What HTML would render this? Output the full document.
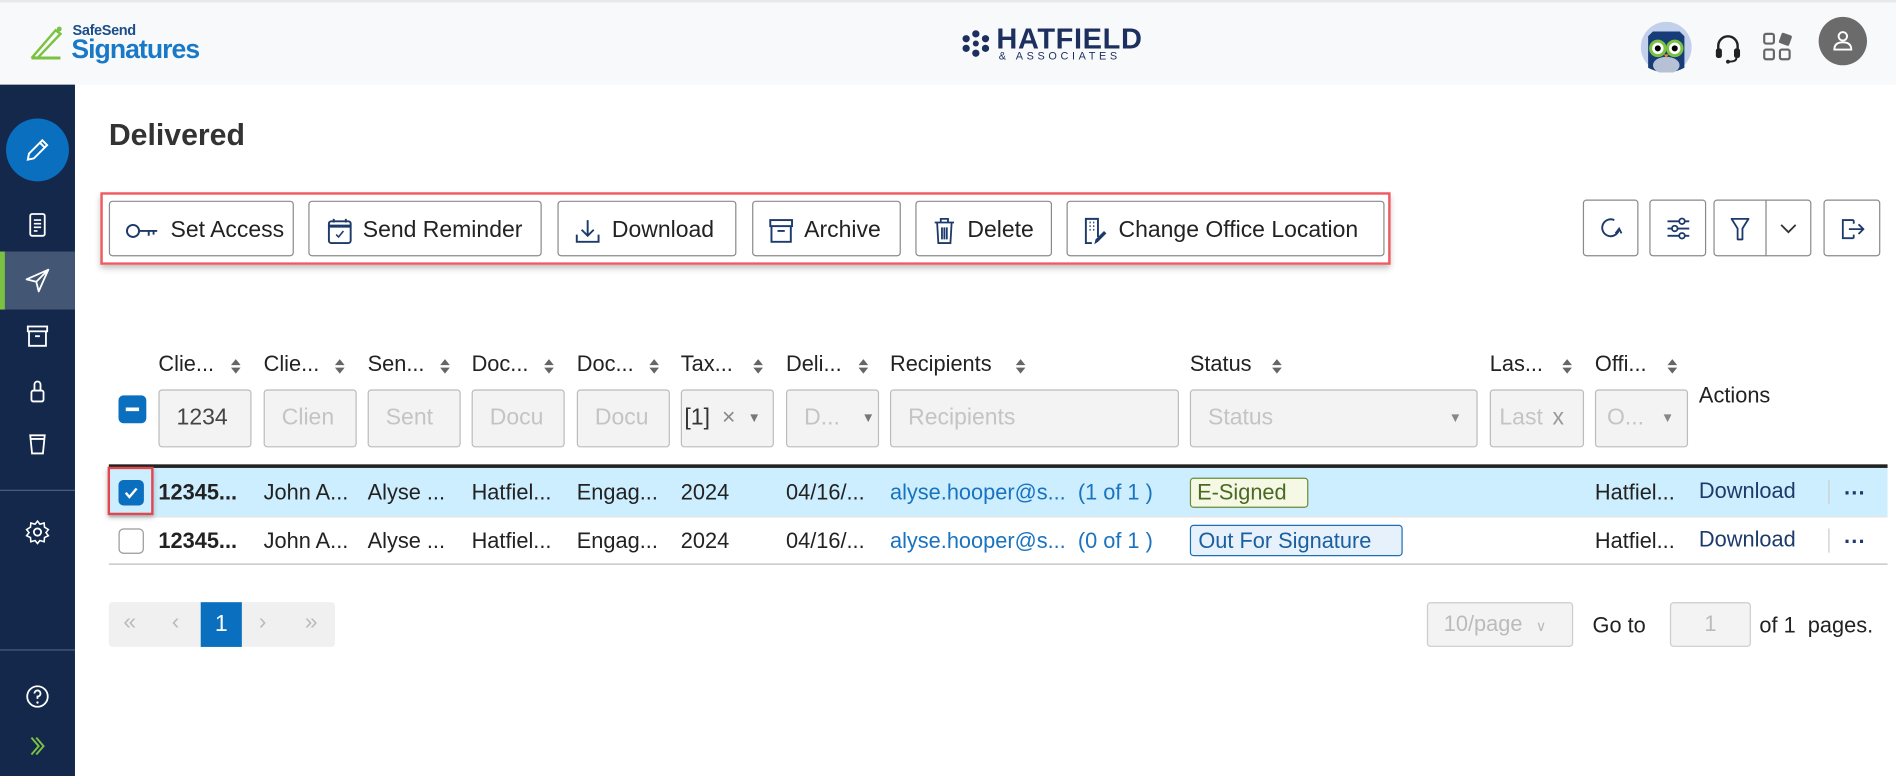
<!DOCTYPE html>
<html><head><meta charset="utf-8">
<style>
*{box-sizing:border-box;margin:0;padding:0}
html,body{width:1896px;height:776px;overflow:hidden;background:#fff}
#s{width:1568px;height:642px;transform:scale(1.2092);transform-origin:0 0;position:relative;font-family:"Liberation Sans",sans-serif;color:#222}
.a{position:absolute}
.hdr{left:0;top:0;width:1568px;height:70px;background:#f8f9fb;border-top:2px solid #e6e8eb}
.side{left:0;top:70px;width:62px;height:572px;background:#13284a}
.ic{position:absolute;left:19px;width:24px;height:24px}
.btn{position:absolute;top:166px;height:46px;border:1px solid #8a8a8a;border-radius:3px;background:#fff;font-size:19px;color:#222;display:flex;align-items:center;padding-left:12px;white-space:nowrap;padding-top:3px}
.btn svg{margin-right:8px}
.rb{position:absolute;top:165px;height:47px;border:1px solid #8a8a8a;border-radius:3px;background:#fff;display:flex;align-items:center;justify-content:center}
.th{position:absolute;top:291px;font-size:18px;color:#222;white-space:nowrap}
.srt{position:absolute;top:296px;width:8px;height:14px}
.in{position:absolute;top:322px;height:48px;background:#f3f3f3;border:1px solid #bcbcbc;border-radius:3px;font-size:19px;color:#c4c4c4;display:flex;align-items:center;padding-left:14px;white-space:nowrap;overflow:hidden}
.td{position:absolute;font-size:18px;white-space:nowrap;color:#222}
.lnk{color:#1a73c0}
</style></head><body><div id="s">
<div class="a hdr"></div>
<svg class="a" style="left:24px;top:20px" width="28" height="30" viewBox="0 0 28 30"><path d="M3 27 L22 5 L26 8 L7 28 Z" fill="none" stroke="#7cc242" stroke-width="2"/><path d="M2 28 H26" stroke="#7cc242" stroke-width="2.5"/><circle cx="25" cy="4" r="2" fill="#7cc242"/></svg>
<div class="a" style="left:60px;top:18px;font-size:12px;font-weight:bold;color:#1b4e8a;letter-spacing:-0.3px">SafeSend</div>
<div class="a" style="left:59px;top:28px;font-size:22px;font-weight:bold;color:#1a79c7;letter-spacing:-0.8px">Signatures</div>
<svg class="a" style="left:793px;top:22px" width="28" height="28" viewBox="0 0 28 28"><g fill="#1c2f5f"><circle cx="6" cy="10" r="3"/><circle cx="6" cy="18" r="3"/><circle cx="14" cy="6" r="3"/><circle cx="14" cy="22" r="3"/><circle cx="22" cy="10" r="3"/><circle cx="22" cy="18" r="3"/><circle cx="14" cy="14" r="2.5"/></g></svg>
<div class="a" style="left:824px;top:19px;font-size:24px;font-weight:bold;color:#1c2f5f;letter-spacing:0.5px">HATFIELD</div>
<div class="a" style="left:826px;top:41px;font-size:9px;color:#1c2f5f;letter-spacing:3px">&amp; ASSOCIATES</div>
<svg class="a" style="left:1357px;top:18px" width="42" height="42" viewBox="0 0 42 42"><circle cx="21" cy="21" r="21" fill="#c3d0ec"/><path d="M6 12 L10 8 L32 8 L36 12 L36 38 Q21 46 6 38Z" fill="#173c77"/><ellipse cx="21" cy="36" rx="11" ry="7" fill="#b7c1d6"/><circle cx="14" cy="22" r="6" fill="#fff" stroke="#7cc242" stroke-width="2.5"/><circle cx="28" cy="22" r="6" fill="#fff" stroke="#7cc242" stroke-width="2.5"/><circle cx="14" cy="22" r="2.5" fill="#000"/><circle cx="28" cy="22" r="2.5" fill="#000"/><path d="M19 27 L21 30 L23 27Z" fill="#f08a24"/></svg>
<svg class="a" style="left:1417px;top:27px" width="24" height="26" viewBox="0 0 24 26"><path d="M4 14 V11 A8 8 0 0 1 20 11 V14" fill="none" stroke="#222" stroke-width="2"/><rect x="2" y="13" width="5" height="8" rx="2" fill="#222"/><rect x="17" y="13" width="5" height="8" rx="2" fill="#222"/><path d="M19 21 Q19 24 13 24" fill="none" stroke="#222" stroke-width="1.6"/><circle cx="12" cy="24" r="1.6" fill="#222"/></svg>
<svg class="a" style="left:1457px;top:26px" width="28" height="26" viewBox="0 0 28 26"><g fill="none" stroke="#666" stroke-width="1.8"><rect x="2" y="2" width="8" height="8" rx="1.5"/><rect x="2" y="15" width="8" height="8" rx="1.5"/><rect x="15" y="15" width="8" height="8" rx="1.5"/></g><rect x="15" y="2" width="9" height="9" rx="1.5" fill="#666" transform="rotate(20 19.5 6.5)"/></svg>
<div class="a" style="left:1504px;top:14px;width:40px;height:40px;border-radius:50%;background:#6b6b6b"></div>
<svg class="a" style="left:1514px;top:24px" width="20" height="20" viewBox="0 0 20 20"><circle cx="10" cy="6" r="3.5" fill="none" stroke="#fff" stroke-width="1.6"/><path d="M3 17 Q3 11 10 11 Q17 11 17 17 Z" fill="none" stroke="#fff" stroke-width="1.6"/></svg>
<div class="a side"></div>
<div class="a" style="left:5px;top:98px;width:52px;height:52px;border-radius:50%;background:#0a6fbf"></div>
<svg class="a" style="left:20px;top:113px" width="22" height="22" viewBox="0 0 22 22"><path d="M3 19 L4 14 L15 3 L19 7 L8 18 Z M13 5 L17 9" fill="none" stroke="#fff" stroke-width="1.6"/></svg>
<svg class="ic" style="top:174px" viewBox="0 0 24 24"><rect x="6" y="3" width="12" height="18" rx="1.5" fill="none" stroke="#fff" stroke-width="1.5"/><path d="M9 8H15M9 11H15M9 14H15M9 17H12" stroke="#fff" stroke-width="1.3"/></svg>
<div class="a" style="left:0;top:208px;width:62px;height:48px;background:#435674"></div>
<div class="a" style="left:0;top:208px;width:4px;height:48px;background:#7cc242"></div>
<svg class="ic" style="top:220px" viewBox="0 0 24 24"><path d="M21 3 L3 11 L11 13 L13 21 Z M11 13 L21 3" fill="none" stroke="#fff" stroke-width="1.5" stroke-linejoin="round"/></svg>
<svg class="ic" style="top:266px" viewBox="0 0 24 24"><rect x="4" y="4" width="16" height="4" fill="none" stroke="#fff" stroke-width="1.5"/><path d="M5 8 V20 H19 V8 M10 12 H14" fill="none" stroke="#fff" stroke-width="1.5"/></svg>
<svg class="ic" style="top:312px" viewBox="0 0 24 24"><rect x="7" y="11" width="10" height="9" rx="1.5" fill="none" stroke="#fff" stroke-width="1.5"/><path d="M9.5 11 V6 A2.5 2.5 0 0 1 14.5 6 V11" fill="none" stroke="#fff" stroke-width="1.5"/></svg>
<svg class="ic" style="top:355px" viewBox="0 0 24 24"><path d="M6 5 H18 L16.5 20 H7.5 Z M6 8 H18" fill="none" stroke="#fff" stroke-width="1.5"/></svg>
<div class="a" style="left:0;top:405px;width:62px;height:1px;background:#4c5f7c"></div>
<svg class="ic" style="top:428px" viewBox="0 0 24 24"><circle cx="12" cy="12" r="3" fill="none" stroke="#fff" stroke-width="1.5"/><path d="M12 3 L14 5.5 L17.5 4.5 L17.8 8 L21 10 L19 12.5 L21 15 L17.8 16.5 L17.5 20 L14 19 L12 21.5 L10 19 L6.5 20 L6.2 16.5 L3 15 L5 12.5 L3 10 L6.2 8 L6.5 4.5 L10 5.5Z" fill="none" stroke="#fff" stroke-width="1.3"/></svg>
<div class="a" style="left:0;top:537px;width:62px;height:1px;background:#4c5f7c"></div>
<svg class="ic" style="top:564px" viewBox="0 0 24 24"><circle cx="12" cy="12" r="8.5" fill="none" stroke="#fff" stroke-width="1.5"/><path d="M9.5 9.5 A2.5 2.5 0 1 1 12 12 V14" fill="none" stroke="#fff" stroke-width="1.5"/><circle cx="12" cy="17" r="1" fill="#fff"/></svg>
<svg class="ic" style="top:605px" viewBox="0 0 24 24"><path d="M7 5 L13 12 L7 19 M11 5 L17 12 L11 19" fill="none" stroke="#7cc242" stroke-width="1.6"/></svg>
<div class="a" style="left:90px;top:98px;font-size:25px;font-weight:bold;color:#333">Delivered</div>
<div class="a" style="left:83px;top:159px;width:1067px;height:60px;border:2px solid #ee5a5f;box-shadow:0 3px 5px rgba(0,0,0,.25)"></div>
<div class="btn" style="left:90px;width:153px"><svg width="30" height="14" viewBox="0 0 30 14"><circle cx="7" cy="7" r="5" fill="none" stroke="#1c3a6b" stroke-width="1.6"/><path d="M12 7 H27 M20 7 V11 M24 7 V10" stroke="#1c3a6b" stroke-width="1.6"/></svg>Set Access</div>
<div class="btn" style="left:255px;width:193px;padding-left:14px"><svg width="22" height="24" viewBox="0 0 22 24"><rect x="2" y="4" width="18" height="18" rx="2" fill="none" stroke="#1c3a6b" stroke-width="1.6"/><path d="M2 8 H20" stroke="#1c3a6b" stroke-width="2.5"/><path d="M6 2 V5 M16 2 V5" stroke="#1c3a6b" stroke-width="1.6"/><path d="M8 15 L10 17 L14 12" fill="none" stroke="#1c3a6b" stroke-width="1.3"/></svg>Send Reminder</div>
<div class="btn" style="left:461px;width:148px"><svg width="24" height="24" viewBox="0 0 24 24"><path d="M12 3 V16 M7 11 L12 16 L17 11 M3 15 V21 H21 V15" fill="none" stroke="#1c3a6b" stroke-width="1.6"/></svg>Download</div>
<div class="btn" style="left:622px;width:123px"><svg width="22" height="24" viewBox="0 0 22 24"><rect x="2" y="3" width="18" height="5" fill="none" stroke="#1c3a6b" stroke-width="1.6"/><path d="M3 8 V21 H19 V8 M8 12 H14" fill="none" stroke="#1c3a6b" stroke-width="1.6"/></svg>Archive</div>
<div class="btn" style="left:757px;width:113px"><svg width="22" height="24" viewBox="0 0 22 24"><path d="M3 5 H19 M8 5 V2 H14 V5 M5 5 L6 22 H16 L17 5 M9 9 V19 M11 9 V19 M13 9 V19" fill="none" stroke="#1c3a6b" stroke-width="1.5"/></svg>Delete</div>
<div class="btn" style="left:882px;width:263px"><svg width="22" height="26" viewBox="0 0 22 26"><path d="M13 18 V3 H3 V23 H8" fill="none" stroke="#1c3a6b" stroke-width="1.6"/><path d="M6 6h1M9 6h1M6 9h1M9 9h1M6 12h1M9 12h1" stroke="#1c3a6b" stroke-width="1.5"/><path d="M10 24 L11 20 L18 13 L20 15 L13 22 Z" fill="#1c3a6b"/></svg>Change Office Location</div>
<div class="rb" style="left:1309px;width:46px"><svg width="20" height="22" viewBox="0 0 20 22"><path d="M13 4 A7 7 0 1 0 17 11" fill="none" stroke="#1c3a6b" stroke-width="1.6"/><path d="M14 15 L17 11 L19 15" fill="none" stroke="#1c3a6b" stroke-width="1.5"/></svg></div>
<div class="rb" style="left:1364px;width:47px"><svg width="22" height="22" viewBox="0 0 22 22"><path d="M2 5H20M2 11H20M2 17H20" stroke="#1c3a6b" stroke-width="1.5"/><circle cx="14" cy="5" r="2.3" fill="#fff" stroke="#1c3a6b" stroke-width="1.5"/><circle cx="8" cy="11" r="2.3" fill="#fff" stroke="#1c3a6b" stroke-width="1.5"/><circle cx="14" cy="17" r="2.3" fill="#fff" stroke="#1c3a6b" stroke-width="1.5"/></svg></div>
<div class="rb" style="left:1417px;width:44px;border-radius:3px 0 0 3px"><svg width="18" height="22" viewBox="0 0 18 22"><path d="M2 3 H16 L11 11 V20 H7 V11 Z" fill="none" stroke="#1c3a6b" stroke-width="1.5" stroke-linejoin="round"/></svg></div>
<div class="rb" style="left:1460px;width:38px;border-radius:0 3px 3px 0"><svg width="16" height="10" viewBox="0 0 16 10"><path d="M2 2 L8 8 L14 2" fill="none" stroke="#333" stroke-width="1.5"/></svg></div>
<div class="rb" style="left:1508px;width:47px"><svg width="22" height="22" viewBox="0 0 22 22"><path d="M12 4 H3 V19 H12 M12 4 V7 M12 19 V16 M8 11.5 H20 M16 7.5 L20 11.5 L16 15.5" fill="none" stroke="#1c3a6b" stroke-width="1.5"/></svg></div>
<div class="th" style="left:131px">Clie...</div>
<div class="th" style="left:218px">Clie...</div>
<div class="th" style="left:304px">Sen...</div>
<div class="th" style="left:390px">Doc...</div>
<div class="th" style="left:477px">Doc...</div>
<div class="th" style="left:563px">Tax...</div>
<div class="th" style="left:650px">Deli...</div>
<div class="th" style="left:736px">Recipients</div>
<div class="th" style="left:984px">Status</div>
<div class="th" style="left:1232px">Las...</div>
<div class="th" style="left:1319px">Offi...</div>
<svg class="srt" style="left:191px"><path d="M0 6 L4 1 L8 6Z M0 8 L4 13 L8 8Z" fill="#666"/></svg>
<svg class="srt" style="left:277px"><path d="M0 6 L4 1 L8 6Z M0 8 L4 13 L8 8Z" fill="#666"/></svg>
<svg class="srt" style="left:364px"><path d="M0 6 L4 1 L8 6Z M0 8 L4 13 L8 8Z" fill="#666"/></svg>
<svg class="srt" style="left:450px"><path d="M0 6 L4 1 L8 6Z M0 8 L4 13 L8 8Z" fill="#666"/></svg>
<svg class="srt" style="left:537px"><path d="M0 6 L4 1 L8 6Z M0 8 L4 13 L8 8Z" fill="#666"/></svg>
<svg class="srt" style="left:623px"><path d="M0 6 L4 1 L8 6Z M0 8 L4 13 L8 8Z" fill="#666"/></svg>
<svg class="srt" style="left:710px"><path d="M0 6 L4 1 L8 6Z M0 8 L4 13 L8 8Z" fill="#666"/></svg>
<svg class="srt" style="left:840px"><path d="M0 6 L4 1 L8 6Z M0 8 L4 13 L8 8Z" fill="#666"/></svg>
<svg class="srt" style="left:1052px"><path d="M0 6 L4 1 L8 6Z M0 8 L4 13 L8 8Z" fill="#666"/></svg>
<svg class="srt" style="left:1292px"><path d="M0 6 L4 1 L8 6Z M0 8 L4 13 L8 8Z" fill="#666"/></svg>
<svg class="srt" style="left:1379px"><path d="M0 6 L4 1 L8 6Z M0 8 L4 13 L8 8Z" fill="#666"/></svg>
<div class="a" style="left:1405px;top:317px;font-size:18px">Actions</div>
<div class="a" style="left:98px;top:327px;width:23px;height:23px;border-radius:4px;background:#0a6fbf"></div>
<div class="a" style="left:104px;top:337px;width:11px;height:3px;background:#fff"></div>
<div class="in" style="left:131px;width:77px;color:#444">1234</div>
<div class="in" style="left:218px;width:77px">Clien</div>
<div class="in" style="left:304px;width:77px">Sent</div>
<div class="in" style="left:390px;width:77px">Docu</div>
<div class="in" style="left:477px;width:77px">Docu</div>
<div class="in" style="left:563px;width:77px;color:#333;padding-left:2px">[1] <span style="color:#888;margin-left:10px">×</span><span style="color:#777;font-size:11px;margin-left:10px">▼</span></div>
<div class="in" style="left:650px;width:77px">D... <span style="color:#777;font-size:11px;margin-left:18px">▼</span></div>
<div class="in" style="left:736px;width:239px">Recipients</div>
<div class="in" style="left:984px;width:238px">Status<span style="color:#888;font-size:11px;margin-left:auto;margin-right:12px">▼</span></div>
<div class="in" style="left:1232px;width:78px;padding-left:7px">Last <span style="color:#999;margin-left:8px">x</span></div>
<div class="in" style="left:1319px;width:77px;padding-left:9px">O... <span style="color:#888;font-size:11px;margin-left:14px">▼</span></div>
<div class="a" style="left:90px;top:384px;width:1471px;height:3px;background:#222"></div>
<div class="a" style="left:90px;top:387px;width:1471px;height:40px;background:#cdeefe"></div>
<div class="a" style="left:90px;top:427px;width:1471px;height:1px;background:#e2e2e2"></div>
<div class="a" style="left:90px;top:466px;width:1471px;height:1px;background:#bbb"></div>
<div class="a" style="left:89px;top:386px;width:38px;height:40px;border:2px solid #e3474c;box-shadow:0 2px 4px rgba(0,0,0,.25)"></div>
<div class="a" style="left:98px;top:397px;width:21px;height:21px;border-radius:4px;background:#0a6fbf"></div>
<svg class="a" style="left:101px;top:400px" width="15" height="15" viewBox="0 0 15 15"><path d="M3 7.5 L6 11 L12 4" fill="none" stroke="#fff" stroke-width="2"/></svg>
<div class="a" style="left:98px;top:437px;width:21px;height:21px;border-radius:4px;border:1px solid #999;background:#fff"></div>
<div class="td" style="left:131px;top:397px;font-weight:bold">12345...</div>
<div class="td" style="left:218px;top:397px">John A...</div>
<div class="td" style="left:304px;top:397px">Alyse ...</div>
<div class="td" style="left:390px;top:397px">Hatfiel...</div>
<div class="td" style="left:477px;top:397px">Engag...</div>
<div class="td" style="left:563px;top:397px">2024</div>
<div class="td" style="left:650px;top:397px">04/16/...</div>
<div class="td lnk" style="left:736px;top:397px">alyse.hooper@s...&nbsp; (1 of 1 )</div>
<div class="a" style="left:984px;top:395px;width:98px;height:25px;border:1px solid #6b8a3a;border-radius:3px;background:#f4f8e4;color:#4a6a23;font-size:18px;padding-left:5px;line-height:23px">E-Signed</div>
<div class="td" style="left:1319px;top:397px">Hatfiel...</div>
<div class="td" style="left:1405px;top:396px;color:#1c3a6b">Download</div>
<div class="a" style="left:1512px;top:397px;width:1px;height:20px;background:#ccc"></div>
<div class="td" style="left:1525px;top:398px;font-weight:bold;color:#1c3a6b">···</div>
<div class="td" style="left:131px;top:437px;font-weight:bold">12345...</div>
<div class="td" style="left:218px;top:437px">John A...</div>
<div class="td" style="left:304px;top:437px">Alyse ...</div>
<div class="td" style="left:390px;top:437px">Hatfiel...</div>
<div class="td" style="left:477px;top:437px">Engag...</div>
<div class="td" style="left:563px;top:437px">2024</div>
<div class="td" style="left:650px;top:437px">04/16/...</div>
<div class="td lnk" style="left:736px;top:437px">alyse.hooper@s...&nbsp; (0 of 1 )</div>
<div class="a" style="left:984px;top:434px;width:176px;height:26px;border:1px solid #1a6fb5;border-radius:3px;background:#e6f1fb;color:#1a5fa0;font-size:18px;padding-left:6px;line-height:24px">Out For Signature</div>
<div class="td" style="left:1319px;top:437px">Hatfiel...</div>
<div class="td" style="left:1405px;top:436px;color:#1c3a6b">Download</div>
<div class="a" style="left:1512px;top:437px;width:1px;height:20px;background:#ccc"></div>
<div class="td" style="left:1525px;top:438px;font-weight:bold;color:#1c3a6b">···</div>
<div class="a" style="left:90px;top:498px;width:187px;height:37px;background:#f0f0f0;border-radius:3px"></div>
<div class="a" style="left:102px;top:504px;font-size:19px;color:#bbb">«</div>
<div class="a" style="left:142px;top:504px;font-size:19px;color:#bbb">‹</div>
<div class="a" style="left:166px;top:498px;width:34px;height:37px;background:#0a6fbf;color:#fff;font-size:19px;text-align:center;line-height:37px">1</div>
<div class="a" style="left:214px;top:504px;font-size:19px;color:#bbb">›</div>
<div class="a" style="left:252px;top:504px;font-size:19px;color:#bbb">»</div>
<div class="a" style="left:1180px;top:498px;width:121px;height:37px;background:#f3f3f3;border:1px solid #ccc;border-radius:3px;color:#bbb;font-size:18px;line-height:35px;padding-left:13px">10/page <span style="font-size:12px;margin-left:6px">∨</span></div>
<div class="a" style="left:1317px;top:507px;font-size:18px">Go to</div>
<div class="a" style="left:1381px;top:498px;width:67px;height:37px;background:#f3f3f3;border:1px solid #ccc;border-radius:3px;color:#bbb;font-size:18px;line-height:35px;text-align:center">1</div>
<div class="a" style="left:1455px;top:507px;font-size:18px;white-space:nowrap">of 1&nbsp; pages.</div>
</div></body></html>
